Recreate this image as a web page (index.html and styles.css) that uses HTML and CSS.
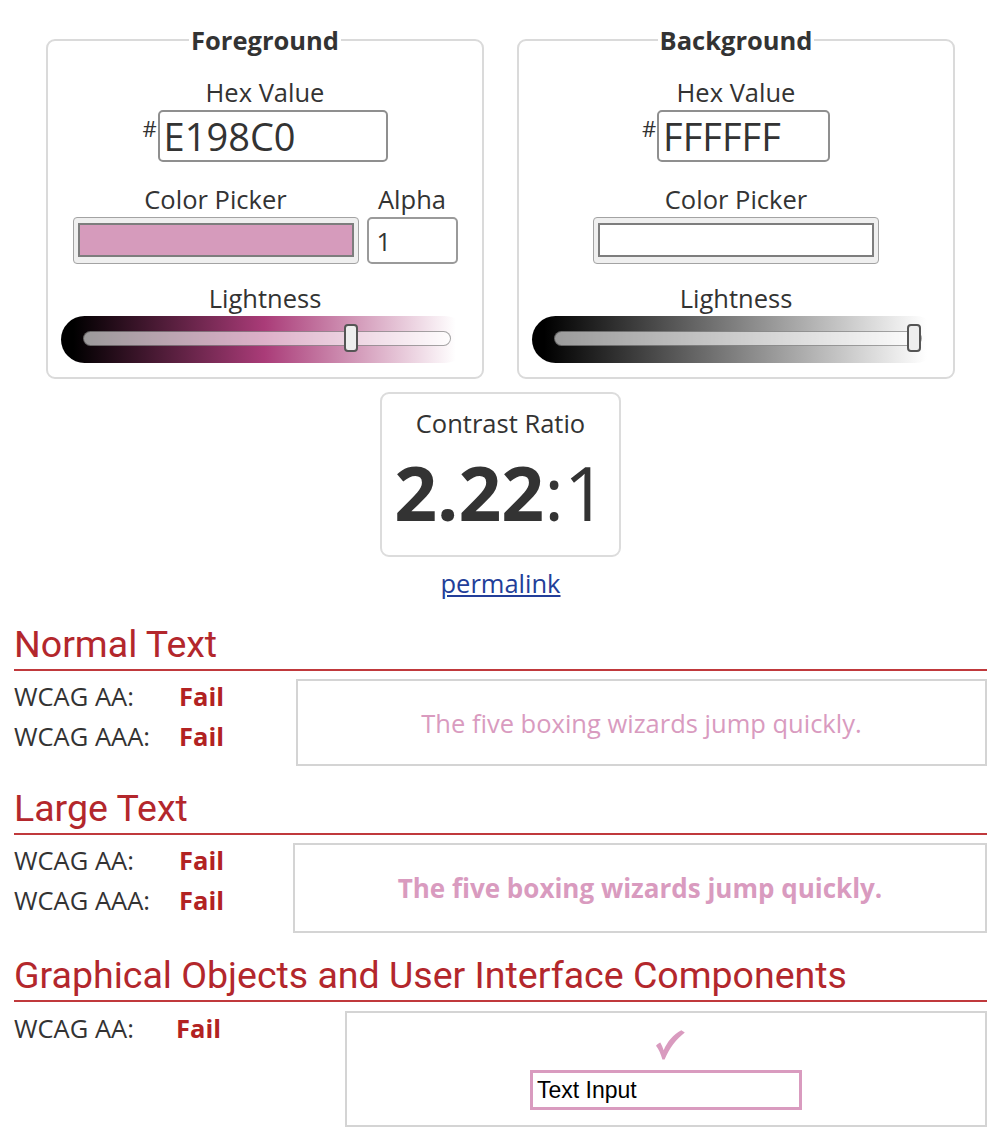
FILE: index.html
```html
<!DOCTYPE html>
<html lang="en">
<head>
<meta charset="utf-8">
<title>Contrast Checker</title>
<link rel="stylesheet" href="styles.css">
</head>
<body>
<main class="page">
  <div class="pickers">
    <fieldset class="panel">
      <legend>Foreground</legend>
      <div class="label">Hex Value</div>
      <div class="hex-row"><span class="hash">#</span><input class="hex hex-fg" type="text" value="E198C0" aria-label="Foreground hex value"></div>
      <div class="picker-row">
        <div class="col col-picker">
          <div class="label">Color Picker</div>
          <div class="picker"><div class="swatch swatch-fg"></div></div>
        </div>
        <div class="col col-alpha">
          <div class="label">Alpha</div>
          <input class="alpha" type="text" value="1" aria-label="Alpha">
        </div>
      </div>
      <div class="label label-light">Lightness</div>
      <div class="slider slider-fg">
        <div class="track"><div class="thumb" style="left:calc((100% - 14px) * 0.739)"></div></div>
      </div>
    </fieldset>
    <fieldset class="panel">
      <legend>Background</legend>
      <div class="label">Hex Value</div>
      <div class="hex-row"><span class="hash">#</span><input class="hex hex-bg" type="text" value="FFFFFF" aria-label="Background hex value"></div>
      <div class="picker-row">
        <div class="col col-picker">
          <div class="label">Color Picker</div>
          <div class="picker"><div class="swatch swatch-bg"></div></div>
        </div>
      </div>
      <div class="label label-light">Lightness</div>
      <div class="slider slider-bg">
        <div class="track"><div class="thumb" style="left:calc((100% - 14px) * 1)"></div></div>
      </div>
    </fieldset>
  </div>

  <div class="ratio-box">
    <div class="ratio-title">Contrast Ratio</div>
    <div class="ratio"><strong>2.22</strong>:1</div>
  </div>
  <div class="permalink-wrap"><a class="permalink" href="#">permalink</a></div>

  <section class="result">
    <h2>Normal Text</h2>
    <div class="checks">
      <div class="verdicts verdicts-normal">
        <span>WCAG AA:</span><span class="fail">Fail</span>
        <span>WCAG AAA:</span><span class="fail">Fail</span>
      </div>
      <div class="sample sample-normal">The five boxing wizards jump quickly.</div>
    </div>
  </section>

  <section class="result">
    <h2>Large Text</h2>
    <div class="checks">
      <div class="verdicts verdicts-large">
        <span>WCAG AA:</span><span class="fail">Fail</span>
        <span>WCAG AAA:</span><span class="fail">Fail</span>
      </div>
      <div class="sample sample-large">The five boxing wizards jump quickly.</div>
    </div>
  </section>

  <section class="result">
    <h2>Graphical Objects and User Interface Components</h2>
    <div class="checks checks-graphic">
      <div class="verdicts verdicts-graphic">
        <span>WCAG AA:</span><span class="fail">Fail</span>
      </div>
      <div class="sample sample-graphic">
        <svg class="check" viewBox="0 0 30 30" width="30" height="30" aria-hidden="true">
          <path d="M0,15.8 C1.5,14.2 2.9,13.1 4.3,12.6 C5.6,14.8 6.6,17.3 7.7,20.2 C11.2,11.8 17.2,4.8 25.3,0.3 L28.8,2.4 C20.2,9.2 13.3,18 8.6,29.6 L6.4,29.6 C4.8,24 2.7,19.2 0,15.8 Z"/>
        </svg>
        <input class="text-input" type="text" value="Text Input" aria-label="Text Input">
      </div>
    </div>
  </section>
</main>
</body>
</html>
```

FILE: styles.css
```css
* {
  box-sizing: border-box;
}

body {
  margin: 0;
  background: #fff;
  color: #333;
  font-family: "Open Sans", "DejaVu Sans", sans-serif;
  font-size: 25.5px;
}

.page {
  padding: 23px 13px 40px 14px;
}

/* ---------- colour pickers ---------- */
.pickers {
  display: flex;
  justify-content: center;
  gap: 33px;
}

.panel {
  width: 438px;
  min-width: 0;
  margin: 0;
  padding: 18px 0 14px;
  border: 2px solid #dadada;
  border-radius: 9px;
}

.panel legend {
  margin: 0 auto;
  padding: 0 2px;
  font-weight: 700;
}

.label {
  text-align: center;
}

.hex-row {
  display: flex;
  justify-content: center;
  margin-top: 1px;
}

.hash {
  font-size: 22px;
  line-height: 22px;
  margin-top: 7px;
  margin-right: 1px;
}

.hex {
  height: 52px;
  padding: 0 4px;
  border: 2px solid #8f8f8f;
  border-radius: 5px;
  color: #333;
  background: #fff;
  font-family: "Open Sans", sans-serif;
  font-size: 38px;
}

.hex-fg {
  width: 230px;
}

.hex-bg {
  width: 173px;
}

.picker-row {
  display: flex;
  justify-content: center;
  gap: 8px;
  margin-top: 20px;
}

.col-picker {
  width: 286px;
}

.col-alpha {
  width: 91px;
}

.picker {
  height: 47px;
  margin-top: 1px;
  padding: 5px 4px 6px;
  background: #efefef;
  border: 1px solid #a3a3a3;
  border-radius: 4px;
}

.swatch {
  height: 100%;
  border: 2px solid #7d7d7d;
}

.swatch-fg {
  background: #d69bbc;
}

.swatch-bg {
  background: #fff;
}

.alpha {
  display: block;
  width: 91px;
  height: 47px;
  margin-top: 1px;
  padding: 0 8px;
  border: 2px solid #9a9a9a;
  border-radius: 5px;
  color: #333;
  background: #fff;
  font-family: "Open Sans", sans-serif;
  font-size: 25.5px;
}

.label-light {
  margin-top: 17px;
}

.slider {
  width: 407px;
  height: 47px;
  margin: 1px 0 0 12.5px;
  padding: 15px 17px 0 22px;
  border-radius: 24px;
}

.slider-fg {
  background: linear-gradient(to right, #000 3%, hsl(327, 48%, 45%) 50%, #fff 97%);
}

.slider-bg {
  background: linear-gradient(to right, #000 3%, #808080 50%, #fff 97%);
}

.track {
  position: relative;
  height: 15px;
  border: 1px solid rgba(0, 0, 0, 0.35);
  border-radius: 8px;
  background: rgba(255, 255, 255, 0.6);
}

.thumb {
  position: absolute;
  top: -8px;
  width: 14px;
  height: 28px;
  border: 2px solid #555;
  border-radius: 4px;
  background: #eee;
}

/* ---------- contrast ratio ---------- */
.ratio-box {
  width: 241px;
  margin: 13px auto 0;
  padding: 12px 0 12px;
  border: 2px solid #dcdcdc;
  border-radius: 9px;
  text-align: center;
}

.ratio {
  margin-top: 1px;
  font-size: 75px;
  line-height: 102px;
}

.ratio strong {
  font-weight: 700;
}

.permalink-wrap {
  margin-top: 9px;
  padding-bottom: 2px;
  text-align: center;
}

.permalink {
  color: #233e99;
}

/* ---------- results ---------- */
.result h2 {
  margin: 20px 0 0;
  padding-bottom: 3px;
  border-bottom: 2px solid #c0393c;
  color: #b3272c;
  font-family: Roboto, "Liberation Sans", sans-serif;
  font-size: 37.5px;
  font-weight: 400;
  line-height: 44px;
}

.checks {
  display: flex;
  align-items: flex-start;
  margin-top: 8px;
}

.checks-graphic {
  margin-top: 9px;
}

.verdicts {
  display: grid;
  row-gap: 6px;
  align-content: start;
}

.verdicts-normal {
  grid-template-columns: 165px 117px;
}

.verdicts-large {
  grid-template-columns: 165px 114px;
}

.verdicts-graphic {
  grid-template-columns: 162px 169px;
}

.fail {
  color: #b22222;
  font-weight: 700;
}

.sample {
  flex: 1;
  display: flex;
  align-items: center;
  justify-content: center;
  border: 2px solid #d4d4d4;
  color: #d99bbf;
}

.sample-normal {
  height: 87px;
}

.sample-large {
  height: 90px;
  font-size: 26px;
  font-weight: 700;
}

.sample-graphic {
  height: 116px;
  flex-direction: column;
  justify-content: flex-start;
  padding-top: 17px;
}

.check {
  display: block;
  margin-left: 10px;
  fill: #d99bbf;
}

.text-input {
  display: block;
  width: 272px;
  height: 40px;
  margin-top: 10px;
  padding: 0 4px;
  border: 3px solid #d99bbf;
  color: #000;
  background: #fff;
  font-family: "Liberation Sans", Arial, sans-serif;
  font-size: 23px;
}
```
